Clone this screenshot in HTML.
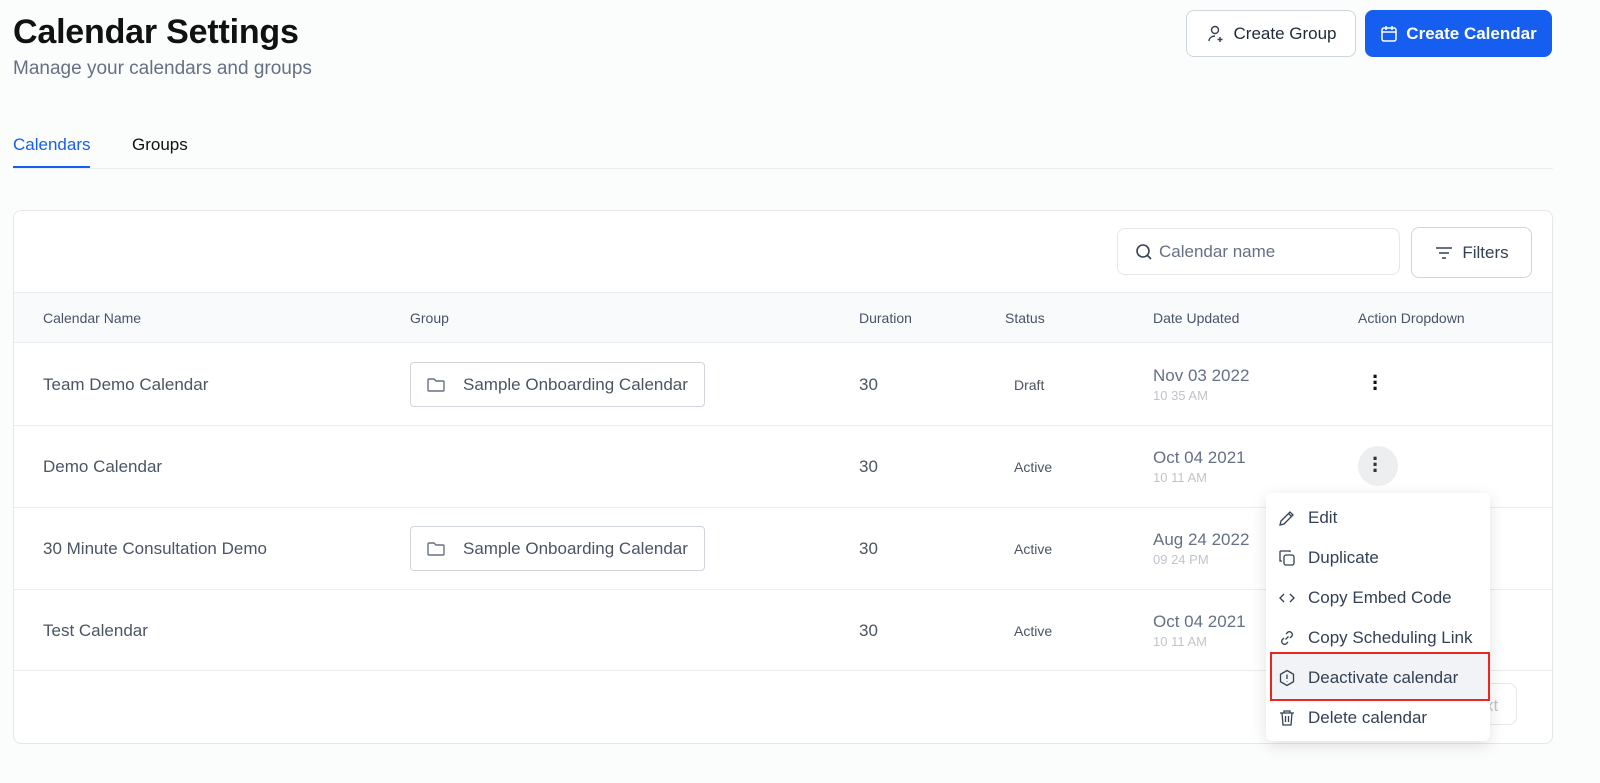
<!DOCTYPE html>
<html><head><style>
*{box-sizing:border-box;margin:0;padding:0}
body{width:1600px;height:783px;background:#fbfcfc;font-family:"Liberation Sans",sans-serif;position:relative;overflow:hidden;color:#1f2937}
.abs{position:absolute}
h1{position:absolute;left:13px;top:13px;font-size:34px;font-weight:bold;color:#111;letter-spacing:-0.2px}
.sub{left:13px;top:58px;font-size:19px;color:#667085}
.btn{position:absolute;border-radius:8px;font-size:17px;display:flex;align-items:center;gap:8px;justify-content:center}
.card{left:13px;top:210px;width:1540px;height:534px;background:#fff;border:1px solid #e5e7eb;border-radius:8px}
.row{position:absolute;left:14px;width:1538px;border-top:1px solid #eaecf0}
.t{position:absolute;font-size:17px;color:#4b5563}
.h{position:absolute;font-size:14px;color:#475467;top:310px}
.grp{position:absolute;left:410px;width:295px;height:45px;border:1px solid #d0d5dd;border-radius:4px;font-size:17px;color:#4b5563;display:flex;align-items:center;padding-left:16px;gap:18px}
.st{position:absolute;left:1014px;font-size:14px;color:#4b5563}
.d{position:absolute;left:1153px;font-size:17px;color:#667085}
.tm{position:absolute;left:1153px;font-size:13px;color:#c0c4cb}
.menu{left:1266px;top:493px;width:224px;height:248px;background:#fff;border-radius:6px;box-shadow:0 4px 16px rgba(0,0,0,.12)}
.mi{position:absolute;left:1278px;font-size:17px;color:#344054;display:flex;align-items:center;gap:12px}
</style></head><body>
<h1>Calendar Settings</h1>
<div class="abs sub">Manage your calendars and groups</div>
<div class="btn" style="left:1186px;top:10px;width:170px;height:47px;border:1px solid #d0d5dd;background:#fff;color:#1f2937"><svg width="20" height="20" viewBox="0 0 20 20" fill="none" stroke="#344054" stroke-width="1.4"><circle cx="9" cy="6" r="3.5"/><path d="M3 17c0-3 3-5 6-5M14 13v5M11.5 15.5h5"/></svg>Create Group</div>
<div class="btn" style="left:1365px;top:10px;width:187px;height:47px;background:#155eef;color:#fff;font-weight:bold"><svg width="18" height="18" viewBox="0 0 18 18" fill="none" stroke="#fff" stroke-width="1.5"><rect x="2" y="3" width="14" height="13" rx="2"/><path d="M2 7h14M6 1v4M12 1v4"/></svg>Create Calendar</div>
<div class="abs" style="left:13px;top:135px;font-size:17px;color:#155eef">Calendars</div>
<div class="abs" style="left:13px;top:166px;width:77px;height:2px;background:#155eef"></div>
<div class="abs" style="left:132px;top:135px;font-size:17px;color:#111">Groups</div>
<div class="abs" style="left:13px;top:168px;width:1540px;height:1px;background:#eaecf0"></div>
<div class="abs card"></div>
<div class="abs" style="left:1117px;top:228px;width:283px;height:47px;border:1px solid #e5e7eb;border-radius:8px;display:flex;align-items:center;padding-left:17px;gap:6px;font-size:17px;color:#667085"><svg width="18" height="18" viewBox="0 0 18 18" fill="none" stroke="#344054" stroke-width="1.6"><circle cx="8" cy="8" r="6"/><path d="M12.5 12.5l3.5 3.5"/></svg>Calendar name</div>
<div class="btn" style="left:1411px;top:227px;width:121px;height:51px;border:1px solid #d0d5dd;color:#344054"><svg width="20" height="16" viewBox="0 0 20 16" stroke="#344054" stroke-width="1.6"><path d="M2 3h16M5 8h10M8 13h4"/></svg>Filters</div>
<div class="abs" style="left:14px;top:292px;width:1538px;height:51px;background:#f9fafb;border-top:1px solid #eaecf0;border-bottom:1px solid #eaecf0"></div>
<div class="h" style="left:43px">Calendar Name</div><div class="h" style="left:410px">Group</div><div class="h" style="left:859px">Duration</div><div class="h" style="left:1005px">Status</div><div class="h" style="left:1153px">Date Updated</div><div class="h" style="left:1358px">Action Dropdown</div>
<div class="row" style="top:425px"></div><div class="row" style="top:507px"></div><div class="row" style="top:589px"></div><div class="row" style="top:670px"></div>
<div class="t" style="left:43px;top:375px">Team Demo Calendar</div>
<div class="grp" style="top:362px"><svg width="18" height="16" viewBox="0 0 18 16" fill="none" stroke="#667085" stroke-width="1.4"><path d="M1 3a1 1 0 011-1h5l2 2h7a1 1 0 011 1v8a1 1 0 01-1 1H2a1 1 0 01-1-1z"/></svg>Sample Onboarding Calendar</div>
<div class="t" style="left:859px;top:375px">30</div><div class="st" style="top:377px">Draft</div>
<div class="d" style="top:366px">Nov 03 2022</div><div class="tm" style="top:388px">10 35 AM</div>
<div class="abs" style="left:1372px;top:374px;font-size:22px;line-height:6px;color:#111;font-weight:bold">·<br>·<br>·</div>
<div class="t" style="left:43px;top:457px">Demo Calendar</div>
<div class="t" style="left:859px;top:457px">30</div><div class="st" style="top:459px">Active</div>
<div class="d" style="top:448px">Oct 04 2021</div><div class="tm" style="top:470px">10 11 AM</div>
<div class="abs" style="left:1358px;top:446px;width:40px;height:40px;border-radius:50%;background:#eceeef"></div>
<div class="abs" style="left:1372px;top:456px;font-size:22px;line-height:6px;color:#333;font-weight:bold">·<br>·<br>·</div>
<div class="t" style="left:43px;top:539px">30 Minute Consultation Demo</div>
<div class="grp" style="top:526px"><svg width="18" height="16" viewBox="0 0 18 16" fill="none" stroke="#667085" stroke-width="1.4"><path d="M1 3a1 1 0 011-1h5l2 2h7a1 1 0 011 1v8a1 1 0 01-1 1H2a1 1 0 01-1-1z"/></svg>Sample Onboarding Calendar</div>
<div class="t" style="left:859px;top:539px">30</div><div class="st" style="top:541px">Active</div>
<div class="d" style="top:530px">Aug 24 2022</div><div class="tm" style="top:552px">09 24 PM</div>
<div class="t" style="left:43px;top:621px">Test Calendar</div>
<div class="t" style="left:859px;top:621px">30</div><div class="st" style="top:623px">Active</div>
<div class="d" style="top:612px">Oct 04 2021</div><div class="tm" style="top:634px">10 11 AM</div>
<div class="abs" style="left:1440px;top:683px;width:77px;height:42px;border:1px solid #e5e7eb;border-radius:8px;font-size:17px;color:#c0c4cb;padding:12px 0 0 44px">xt</div>
<div class="abs menu"></div>
<div class="abs" style="left:1270px;top:652px;width:220px;height:49px;background:#f2f3f6;border:2px solid #e8281e"></div>
<div class="mi" style="top:508px"><svg width="18" height="18" viewBox="0 0 18 18" fill="none" stroke="#344054" stroke-width="1.3"><path d="M2 16l1-4 9-9 3 3-9 9zM10.5 4.5l3 3"/></svg>Edit</div>
<div class="mi" style="top:548px"><svg width="18" height="18" viewBox="0 0 18 18" fill="none" stroke="#344054" stroke-width="1.3"><rect x="6" y="6" width="10" height="10" rx="2"/><path d="M12 3V2H3a1 1 0 00-1 1v9h2"/></svg>Duplicate</div>
<div class="mi" style="top:588px"><svg width="18" height="18" viewBox="0 0 18 18" fill="none" stroke="#344054" stroke-width="1.3"><path d="M6 5L2 9l4 4M12 5l4 4-4 4"/></svg>Copy Embed Code</div>
<div class="mi" style="top:628px"><svg width="18" height="18" viewBox="0 0 18 18" fill="none" stroke="#344054" stroke-width="1.3"><path d="M7.5 10.5l3-3M8 5l2-2a3 3 0 014 4l-2 2M10 13l-2 2a3 3 0 01-4-4l2-2"/></svg>Copy Scheduling Link</div>
<div class="mi" style="top:668px"><svg width="18" height="18" viewBox="0 0 18 18" fill="none" stroke="#344054" stroke-width="1.3"><path d="M9 1.5l6.5 3.75v7.5L9 16.5 2.5 12.75v-7.5z"/><path d="M9 5.5v4.5M9 12v.5"/></svg>Deactivate calendar</div>
<div class="mi" style="top:708px"><svg width="18" height="18" viewBox="0 0 18 18" fill="none" stroke="#344054" stroke-width="1.3"><path d="M2 4h14M6 4V2h6v2M4 4l1 12h8l1-12M7.5 7v6M10.5 7v6"/></svg>Delete calendar</div>
</body></html>
